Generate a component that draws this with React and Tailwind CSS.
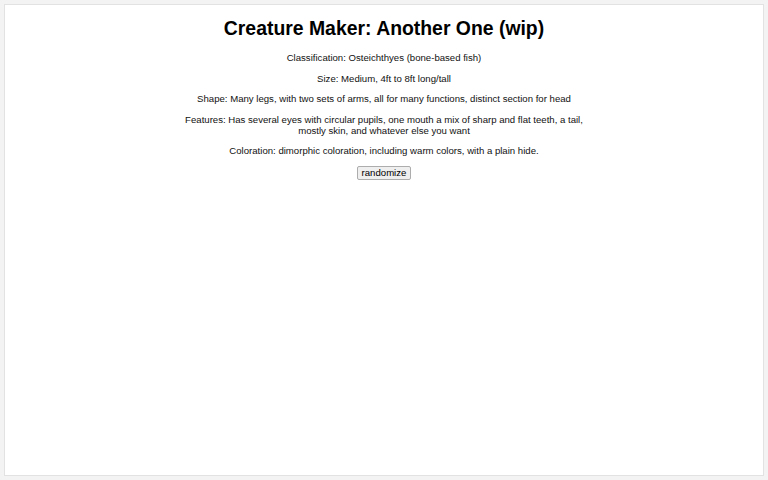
import React from "react";
import { useState } from "react";

const traits = {
  classification: "Osteichthyes (bone-based fish)",
  size: "Medium, 4ft to 8ft long/tall",
  shape: "Many legs, with two sets of arms, all for many functions, distinct section for head",
  features:
    "Has several eyes with circular pupils, one mouth a mix of sharp and flat teeth, a tail, mostly skin, and whatever else you want",
  coloration: "dimorphic coloration, including warm colors, with a plain hide.",
};

const App = () => {
  const [creature] = useState(traits);

  return (
    <div className="min-h-screen bg-[#f3f3f3] p-[4px] font-['Liberation_Sans',Arial,sans-serif] text-black">
      <div className="h-[472px] border border-[#e2e2e2] bg-white flex flex-col items-center">
        <h1 className="mt-[11px] text-[19.4px] font-bold leading-[24px]">
          Creature Maker: Another One (wip)
        </h1>
        <div className="mt-[12px] flex flex-col items-center gap-[9.5px] text-[9.6px] leading-[11px] text-center text-[#111]">
          <p>Classification: {creature.classification}</p>
          <p>Size: {creature.size}</p>
          <p>Shape: {creature.shape}</p>
          <p className="max-w-[400px]">Features: {creature.features}</p>
          <p>Coloration: {creature.coloration}</p>
        </div>
        <button className="mt-[10px] px-[4px] border border-[#adadad] bg-[#efefef] rounded-[2px] text-[9.6px] leading-[12px]">
          randomize
        </button>
      </div>
    </div>
  );
};

export default App;
